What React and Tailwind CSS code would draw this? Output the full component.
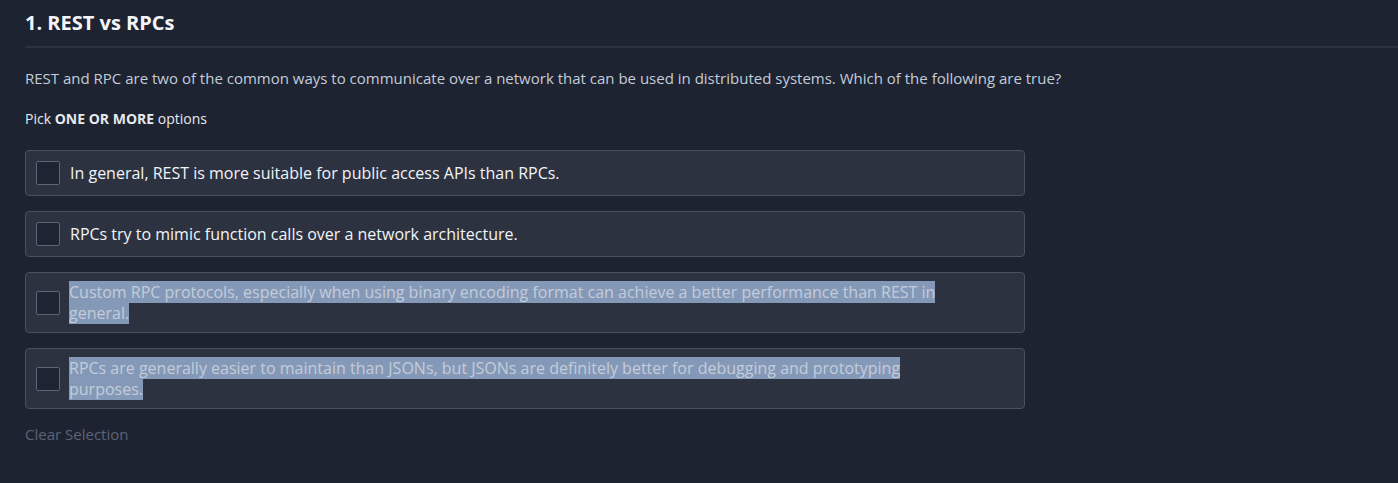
import { useState } from 'react';

const OPTIONS = [
  { id: 1, text: 'In general, REST is more suitable for public access APIs than RPCs.' },
  { id: 2, text: 'RPCs try to mimic function calls over a network architecture.' },
  {
    id: 3,
    text: 'Custom RPC protocols, especially when using binary encoding format can achieve a better performance than REST in general.',
    highlighted: true,
  },
  {
    id: 4,
    text: 'RPCs are generally easier to maintain than JSONs, but JSONs are definitely better for debugging and prototyping purposes.',
    highlighted: true,
  },
];

export default function App() {
  const [picked, setPicked] = useState([]);

  function toggle(id) {
    setPicked(p => (p.includes(id) ? p.filter(x => x !== id) : [...p, id]));
  }

  return (
    <div className="min-h-screen bg-[#1e2331] pl-[25px] pt-[9px] font-['Open_Sans',sans-serif]">
      <h2 className="text-[20px] leading-[27px] font-bold text-[#f3f5f8] pb-[10px] border-b-2 border-[#2d3240]">
        1. REST vs RPCs
      </h2>

      <p className="mt-[20px] text-[15px] leading-[20px] text-[#c3ccd9]">
        REST and RPC are two of the common ways to communicate over a network that can be used in distributed systems. Which of the following are true?
      </p>

      <p className="mt-[22px] text-[14px] leading-[18px] text-[#e6e9ee]">
        Pick <span className="font-bold">ONE OR MORE</span> options
      </p>

      <div className="mt-[22px] w-[1000px] flex flex-col gap-[15px]">
        {OPTIONS.map(opt => (
          <label
            key={opt.id}
            className="flex items-center gap-[10px] min-h-[46px] px-[10px] py-[9px] rounded-[4px] border border-[#4a5060] bg-[#2d3240] cursor-pointer"
          >
            <span
              onClick={() => toggle(opt.id)}
              className={`shrink-0 w-[24px] h-[24px] rounded-[2px] border border-[#5c6475] ${
                picked.includes(opt.id) ? 'bg-[#4b6fa5]' : 'bg-[#1f2433]'
              }`}
            />
            {opt.highlighted ? (
              <span className="max-w-[890px] -ml-px text-[16px] leading-[20.5px]">
                <span className="bg-[#8499b8] text-[#c4ccd8] box-decoration-clone">{opt.text}</span>
              </span>
            ) : (
              <span className="max-w-[890px] text-[16px] leading-[20px] text-[#f2f4f7]">{opt.text}</span>
            )}
          </label>
        ))}
      </div>

      <button
        onClick={() => setPicked([])}
        className="mt-[15px] text-[15px] leading-[20px] text-[#5b6376]"
      >
        Clear Selection
      </button>
    </div>
  );
}
